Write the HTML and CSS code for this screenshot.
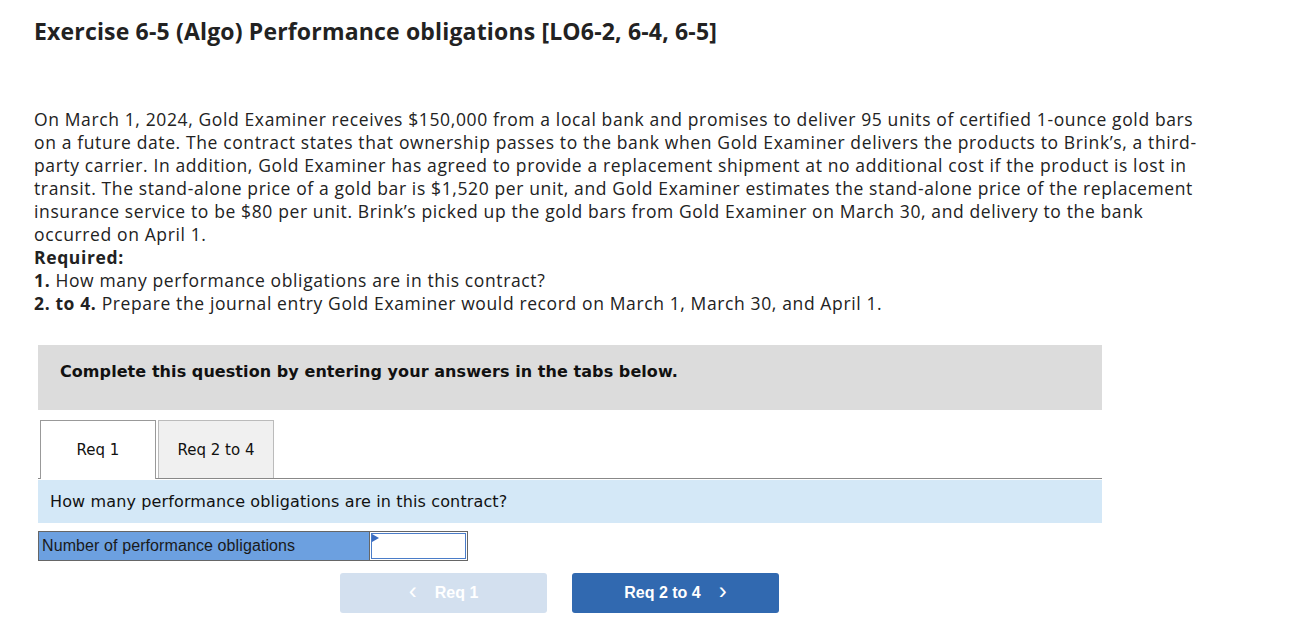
FILE: index.html
```html
<!DOCTYPE html>
<html>
<head>
<meta charset="utf-8">
<link rel="stylesheet" href="styles.css">
</head>
<body>
<div class="page">
  <h1 class="title">Exercise 6-5 (Algo) Performance obligations [LO6-2, 6-4, 6-5]</h1>
  <div class="problem">
    <p>On March 1, 2024, Gold Examiner receives $150,000 from a local bank and promises to deliver 95 units of certified 1-ounce gold bars<br>on a future date. The contract states that ownership passes to the bank when Gold Examiner delivers the products to Brink’s, a third-<br>party carrier. In addition, Gold Examiner has agreed to provide a replacement shipment at no additional cost if the product is lost in<br>transit. The stand-alone price of a gold bar is $1,520 per unit, and Gold Examiner estimates the stand-alone price of the replacement<br>insurance service to be $80 per unit. Brink’s picked up the gold bars from Gold Examiner on March 30, and delivery to the bank<br>occurred on April 1.</p>
    <p class="req-head"><b>Required:</b></p>
    <p><b>1.</b> How many performance obligations are in this contract?</p>
    <p><b>2. to 4.</b> Prepare the journal entry Gold Examiner would record on March 1, March 30, and April 1.</p>
  </div>
  <div class="quiz">
    <div class="banner">Complete this question by entering your answers in the tabs below.</div>
    <div class="tabs">
      <div class="tab active">Req 1</div>
      <div class="tab">Req 2 to 4</div>
    </div>
    <div class="question">How many performance obligations are in this contract?</div>
    <div class="answer-row">
      <div class="label">Number of performance obligations</div>
      <div class="input-cell"><div class="input"><span class="flag"></span></div></div>
    </div>
    <div class="nav">
      <button class="btn prev"><span class="chev">&lsaquo;</span>Req 1</button>
      <button class="btn next">Req 2 to 4<span class="chev r">&rsaquo;</span></button>
    </div>
  </div>
</div>
</body>
</html>
```
FILE: styles.css
```css
html, body { margin: 0; padding: 0; background: #fff; }
body { font-family: "Open Sans", Lato, Arial, sans-serif; color: #222; }
.page { padding: 17px 34px 0 34px; }
.title { margin: 0; font-size: 23px; font-weight: 700; line-height: 28px; color: #222; letter-spacing: 0.17px; }
.problem { margin-top: 63px; font-size: 17.5px; line-height: 23px; width: 1230px; letter-spacing: 0.62px; }
.problem p { margin: 0; white-space: nowrap; }
.quiz { margin-left: 4px; width: 1064px; margin-top: 30px; }
.banner { background: #dcdcdc; height: 65px; box-sizing: border-box; padding: 17px 22px 0 22px; font-family: "DejaVu Sans", Verdana, sans-serif; font-weight: 700; font-size: 16px; line-height: 20px; color: #111; letter-spacing: 0.07px; }
.tabs { display: flex; margin-top: 10px; border-bottom: 1px solid #888; height: 58px; padding-left: 2px; gap: 2px; }
.tab { width: 116px; height: 58px; box-sizing: border-box; border: 1px solid #bbb; border-bottom: none; background: #f0f0f0; display: flex; align-items: center; justify-content: center; font-family: "DejaVu Sans", Verdana, sans-serif; font-size: 15px; color: #111; }
.tab.active { background: #fff; border-color: #999; height: 59px; margin-bottom: -1px; }
.question { margin-top: 1px; background: #d4e8f7; height: 43px; padding-left: 12px; display: flex; align-items: center; font-family: "DejaVu Sans", Verdana, sans-serif; font-size: 16px; color: #111; letter-spacing: 0.13px; }
.answer-row { margin-top: 8px; display: flex; width: 430px; height: 30px; box-sizing: border-box; border: 1px solid #666; }
.label { width: 331px; background: #6ca0e0; border-right: 1px solid #666; font-family: "Liberation Sans", Arial, sans-serif; font-size: 16px; color: #1a1a1a; padding-left: 3px; display: flex; align-items: center; box-sizing: border-box; letter-spacing: 0.1px; }
.input-cell { flex: 1; padding: 1px; background: #fff; }
.input { position: relative; height: 100%; box-sizing: border-box; border: 1px solid #4a7cc8; background: #fff; }
.flag { position: absolute; left: 0; top: 0; width: 0; height: 0; border-top: 4px solid transparent; border-bottom: 4px solid transparent; border-left: 7px solid #3a6cc0; }
.nav { display: flex; gap: 25px; margin-top: 12px; margin-left: 302px; }
.btn { width: 207px; height: 40px; border: none; border-radius: 3px; font-family: "Liberation Sans", Arial, sans-serif; font-weight: 700; font-size: 16px; color: #fff; display: flex; align-items: center; justify-content: center; padding: 0; }
.btn.prev { background: #d3e0ef; }
.btn.next { background: #3169b0; }
.chev { font-size: 24px; font-weight: 400; margin-right: 18px; line-height: 1; position: relative; top: -2px; }
.chev.r { margin-right: 0; margin-left: 18px; }
```
